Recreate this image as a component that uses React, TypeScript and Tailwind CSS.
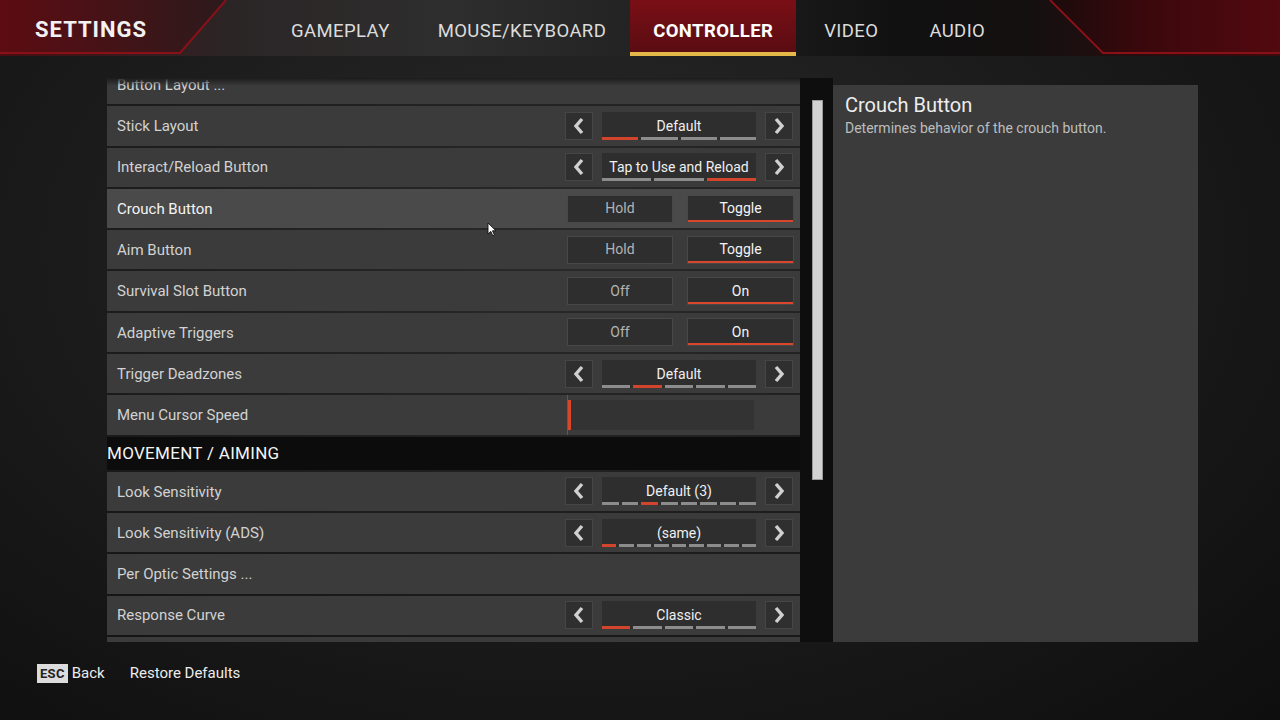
import React from 'react';

type Row =
  | { kind: 'link'; label: string }
  | { kind: 'select'; label: string; value: string; count: number; active: number }
  | { kind: 'toggle'; label: string; left: string; right: string; active: number; hl?: boolean }
  | { kind: 'slider'; label: string }
  | { kind: 'header'; label: string };

const rows: Row[] = [
  { kind: 'link', label: 'Button Layout ...' },
  { kind: 'select', label: 'Stick Layout', value: 'Default', count: 4, active: 0 },
  { kind: 'select', label: 'Interact/Reload Button', value: 'Tap to Use and Reload', count: 3, active: 2 },
  { kind: 'toggle', label: 'Crouch Button', left: 'Hold', right: 'Toggle', active: 1, hl: true },
  { kind: 'toggle', label: 'Aim Button', left: 'Hold', right: 'Toggle', active: 1 },
  { kind: 'toggle', label: 'Survival Slot Button', left: 'Off', right: 'On', active: 1 },
  { kind: 'toggle', label: 'Adaptive Triggers', left: 'Off', right: 'On', active: 1 },
  { kind: 'select', label: 'Trigger Deadzones', value: 'Default', count: 5, active: 1 },
  { kind: 'slider', label: 'Menu Cursor Speed' },
  { kind: 'header', label: 'MOVEMENT / AIMING' },
  { kind: 'select', label: 'Look Sensitivity', value: 'Default (3)', count: 8, active: 2 },
  { kind: 'select', label: 'Look Sensitivity  (ADS)', value: '(same)', count: 9, active: 0 },
  { kind: 'link', label: 'Per Optic Settings ...' },
  { kind: 'select', label: 'Response Curve', value: 'Classic', count: 5, active: 0 },
  { kind: 'link', label: '' },
];

const tabs = ['GAMEPLAY', 'MOUSE/KEYBOARD', 'CONTROLLER', 'VIDEO', 'AUDIO'];

const Chevron = ({ dir }: { dir: 'l' | 'r' }) => (
  <svg width="12" height="18" viewBox="0 0 12 18">
    <polyline
      points={dir === 'l' ? '9,2 3,9 9,16' : '3,2 9,9 3,16'}
      fill="none"
      stroke="#d0d0d0"
      strokeWidth="3.4"
      strokeLinejoin="miter"
    />
  </svg>
);

const ArrowBox = ({ dir }: { dir: 'l' | 'r' }) => (
  <div className="w-[28px] h-[28px] bg-[#2f2f2f] border border-[#464646] flex items-center justify-center">
    <Chevron dir={dir} />
  </div>
);

const Selector = ({ value, count, active }: { value: string; count: number; active: number }) => (
  <div className="flex items-center gap-[9px]">
    <ArrowBox dir="l" />
    <div className="w-[154px] h-[28px] bg-[#2e2e2e] flex flex-col">
      <div className="flex-1 flex items-center justify-center text-[14px] text-[#f0f0f0] pt-[4px]">{value}</div>
      <div className="flex gap-[3px] h-[3px]">
        {Array.from({ length: count }).map((_, i) => (
          <div key={i} className={`flex-1 ${i === active ? 'bg-[#d2442c]' : 'bg-[#8c8c8c]'}`} />
        ))}
      </div>
    </div>
    <ArrowBox dir="r" />
  </div>
);

const Toggle = ({ left, right, active }: { left: string; right: string; active: number }) => (
  <div className="flex gap-[14px]">
    {[left, right].map((t, i) => (
      <div
        key={t}
        className={`${i === 0 ? 'w-[106px]' : 'w-[107px]'} h-[28px] bg-[#2e2e2e] border border-[#484848] flex flex-col`}
      >
        <div className={`flex-1 flex items-center justify-center text-[14px] pt-[2px] ${i === active ? 'text-[#f4f4f4]' : 'text-[#b4b4b4]'}`}>
          {t}
        </div>
        <div className={`h-[2px] ${i === active ? 'bg-[#d9462c]' : 'bg-transparent'}`} />
      </div>
    ))}
  </div>
);

const Slider = () => (
  <div className="h-full flex items-center border-l border-[#5a5a5a] mr-[46px]">
    <div className="w-[186px] h-[30px] bg-[#333333] flex">
      <div className="w-[3px] h-full bg-[#d9462c]" />
    </div>
  </div>
);

const Cursor = () => (
  <svg className="absolute left-[487px] top-[222px]" width="10" height="15" viewBox="0 0 10 15">
    <path d="M1 1 L1 12 L3.8 9.4 L5.8 13.8 L7.4 13 L5.5 8.8 L9 8.8 Z" fill="#fff" stroke="#111" strokeWidth="0.9" />
  </svg>
);

export default function App() {
  return (
    <div
      className="relative w-[1280px] h-[720px] overflow-hidden bg-[#171717] text-white"
      style={{ fontFamily: 'Roboto, "Liberation Sans", sans-serif' }}
    >
      {/* page vignette */}
      <div className="absolute inset-0 bg-[radial-gradient(ellipse_at_45%_35%,#2a2a2a_0%,#1a1a1a_55%,#0e0e0e_100%)]" />

      {/* header */}
      <div className="relative h-[56px] bg-[linear-gradient(90deg,#4a0d12_0%,#2b2526_18%,#2e2e2e_35%,#1f1f1f_55%,#111111_70%,#141010_80%,#3e0a0e_100%)]">
        <svg className="absolute inset-0" width="1280" height="56" viewBox="0 0 1280 56">
          <defs>
            <linearGradient id="lr" x1="0" x2="1" y1="0" y2="0">
              <stop offset="0" stopColor="#5c0c12" />
              <stop offset="1" stopColor="#2c1a1c" />
            </linearGradient>
            <linearGradient id="rr" x1="0" x2="1" y1="0" y2="0">
              <stop offset="0" stopColor="#1a0b0c" />
              <stop offset="0.4" stopColor="#3a080c" />
              <stop offset="1" stopColor="#52090f" />
            </linearGradient>
          </defs>
          <polygon points="0,0 226,0 180,53 0,53" fill="url(#lr)" />
          <polyline points="226,0 180,53 0,53" fill="none" stroke="#8a1018" strokeWidth="2" />
          <polygon points="1050,0 1280,0 1280,53 1103,53" fill="url(#rr)" />
          <polyline points="1050,0 1103,53 1280,53" fill="none" stroke="#8a1018" strokeWidth="2" />
        </svg>
        <div className="relative flex items-center h-full">
          <div className="pl-[35px] w-[267px] text-[22px] font-bold tracking-[1px] text-[#f2f2f2] pt-[2px]">SETTINGS</div>
          {tabs.map((t) => (
            <div
              key={t}
              className={`h-full flex items-center text-[18.5px] tracking-[0.4px] ${
                t === 'CONTROLLER'
                  ? 'w-[166px] justify-center bg-[linear-gradient(180deg,#7a0f16_0%,#5a0c12_100%)] font-bold text-white border-b-[4px] border-[#e5b84a] pt-[12px]'
                  : t === 'AUDIO'
                  ? 'pl-[27px] pt-[8px] text-[#dcdcdc]'
                  : t === 'VIDEO'
                  ? 'pl-[28px] pr-[24px] pt-[8px] text-[#dcdcdc]'
                  : 'px-[24px] pt-[8px] text-[#dcdcdc]'
              }`}
            >
              {t}
            </div>
          ))}
        </div>
      </div>

      {/* main */}
      <div className="relative flex pl-[107px] pt-[22px]">
        {/* list */}
        <div className="relative w-[693px] h-[564px] overflow-hidden">
          <div className="flex flex-col gap-[2px] mt-[-13px]">
            {rows.map((r, i) => {
              if (r.kind === 'header') {
                return (
                  <div key={i} className="h-[33px] bg-[#0c0c0c] flex items-center text-[17px] text-[#f4f4f4] tracking-[0.3px] pt-[2px]">
                    {r.label}
                  </div>
                );
              }
              const hl = r.kind === 'toggle' && r.hl;
              return (
                <div
                  key={i}
                  className={`h-[39.3px] shrink-0 flex items-center justify-between ${
                    hl ? 'bg-[#4a4a4a]' : 'bg-[#3b3b3b]'
                  }`}
                >
                  <div className={`pl-[10px] text-[15px] pt-[1px] ${hl ? 'text-[#f4f4f4]' : 'text-[#d2d2d2]'}`}>{r.label}</div>
                  {r.kind === 'select' && (
                    <div className="pr-[7px]">
                      <Selector value={r.value} count={r.count} active={r.active} />
                    </div>
                  )}
                  {r.kind === 'toggle' && (
                    <div className="pr-[6px]">
                      <Toggle left={r.left} right={r.right} active={r.active} />
                    </div>
                  )}
                  {r.kind === 'slider' && <Slider />}
                </div>
              );
            })}
          </div>
          <div className="absolute left-0 right-0 top-0 h-[8px] bg-[linear-gradient(180deg,#1c1c1c,transparent)]" />
        </div>

        {/* scrollbar */}
        <div className="w-[33px] h-[564px] bg-[#0e0e0e] flex justify-center pt-[22px] pl-[1px]">
          <div className="w-[11px] h-[380px] bg-[#d2d2d2] border border-[#9a9a9a]" />
        </div>

        {/* description */}
        <div className="w-[365px] h-[557px] mt-[7px] bg-[#3b3b3b] px-[12px] pt-[8px]">
          <div className="text-[20px] text-[#ededed] leading-[24px]">Crouch Button</div>
          <div className="text-[14px] text-[#bdbdbd] leading-[18px] mt-[2px]">Determines behavior of the crouch button.</div>
        </div>
      </div>

      {/* footer */}
      <div className="absolute left-[37px] top-[662px] flex items-center">
        <div className="h-[19px] px-[3px] bg-[#dcdcdc] text-[#222] text-[13px] font-bold flex items-center tracking-[0.3px]">ESC</div>
        <div className="ml-[4px] text-[15px] text-[#ececec]">Back</div>
        <div className="ml-[25px] text-[15px] text-[#ececec]">Restore Defaults</div>
      </div>

      <Cursor />
    </div>
  );
}
